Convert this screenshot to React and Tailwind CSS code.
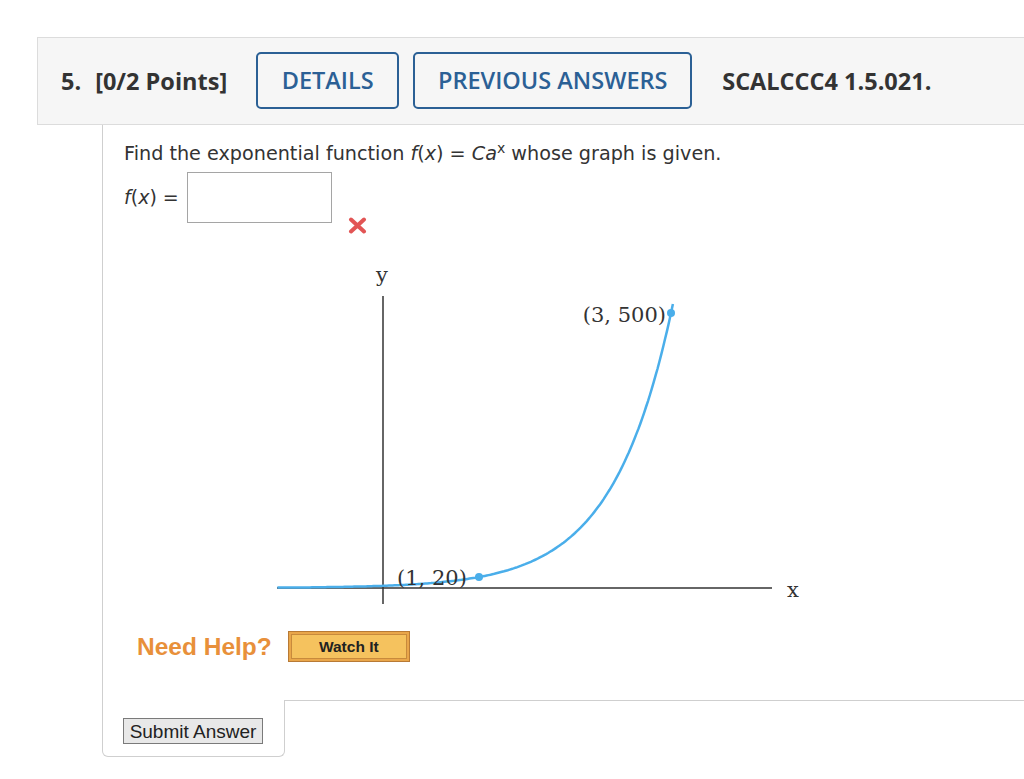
import React from "react";

// exponential curve 4 * 5^x drawn on the graph's own pixel scale
const ox = 259;
const oy = 338;
const ux = 96;
const uy = 0.55;

function curvePath() {
  const pts = [];
  for (let u = -1.1; u <= 3.04; u += 0.02) {
    const px = ox + u * ux;
    const py = oy - uy * 4 * Math.pow(5, u);
    pts.push(`${px.toFixed(1)},${py.toFixed(1)}`);
  }
  return "M" + pts.join(" L");
}

function Graph() {
  return (
    <svg width="700" height="370" className="block mt-[27px]">
      <line x1="153" y1={oy} x2="648" y2={oy} stroke="#333" strokeWidth="1.5" />
      <line x1={ox} y1="46" x2={ox} y2="354" stroke="#333" strokeWidth="1.5" />
      <path d={curvePath()} fill="none" stroke="#4aaeea" strokeWidth="2.5" />
      <circle cx={ox + ux} cy={oy - uy * 20} r="4" fill="#4aaeea" />
      <circle cx={ox + 3 * ux} cy={oy - uy * 500} r="4" fill="#4aaeea" />
      <g fontFamily="'DejaVu Serif', serif" fontSize="21" fill="#333">
        <text x="258" y="32" textAnchor="middle">y</text>
        <text x="669" y="347" textAnchor="middle">x</text>
        <text x="542" y="72" textAnchor="end">(3, 500)</text>
        <text x="273" y="335">(1, 20)</text>
      </g>
    </svg>
  );
}

export default function App() {
  return (
    <div className="w-[1024px] min-h-[779px] bg-white">
      <div className="pt-[37px] pl-[37px]">
        <div className="flex items-center h-[88px] pt-[2px] border-y border-l border-[#dcdcdc] bg-[#f6f6f6] pl-[23px] font-['Open_Sans',sans-serif] text-[#333]">
          <span className="font-bold text-[23.5px]">5.</span>
          <span className="ml-[14px] font-bold text-[23.5px]">[0/2 Points]</span>
          <button className="ml-[29px] -mt-[3px] w-[143px] h-[57px] border-2 border-[#2b6095] rounded-[5px] text-[#2b6095] font-semibold text-[23.5px]">
            DETAILS
          </button>
          <button className="ml-[14px] -mt-[3px] w-[279px] h-[57px] border-2 border-[#2b6095] rounded-[5px] text-[#2b6095] font-semibold text-[23.5px]">
            PREVIOUS ANSWERS
          </button>
          <span className="ml-[30px] font-bold text-[23.5px]">SCALCCC4 1.5.021.</span>
        </div>
      </div>

      <div className="ml-[102px]">
        <div className="border-l border-[#cfcfcf] pl-[21px] pt-[17px] pb-[38px] font-['DejaVu_Sans',sans-serif] text-[#333]">
          <p className="text-[19.2px] leading-[24px]">
            Find the exponential function <i>f</i>(<i>x</i>) = <i>Ca</i>
            <sup className="text-[14px]">x</sup> whose graph is given.
          </p>
          <div className="flex items-center mt-[6px]">
            <span className="text-[19px]">
              <i>f</i>(<i>x</i>) =
            </span>
            <div className="ml-[8px] w-[145px] h-[51px] border border-[#a5a5a5] bg-white" />
            <svg width="19" height="17" viewBox="0 0 19 17" className="ml-[16px] self-end -mb-[11px]">
              <path d="M3 2.5 L16 14.5 M16 2.5 L3 14.5" stroke="#e25555" strokeWidth="4" strokeLinecap="round" />
            </svg>
          </div>
          <Graph />
          <div className="flex items-center mt-[11px] ml-[13px]">
            <span className="font-['Liberation_Sans',Arial,sans-serif] font-bold text-[24.5px] leading-[31px] text-[#e8903a]">
              Need Help?
            </span>
            <div className="ml-[16px] w-[122px] h-[31px] border border-[#b87a35] bg-[#e9a64a] p-[2px]">
              <div className="h-full border border-[#c88a3c] bg-[#f5c25e] flex items-center justify-center font-['Liberation_Sans',Arial,sans-serif] font-bold text-[15.5px] text-[#222]">
                Watch It
              </div>
            </div>
          </div>
        </div>
        <div className="flex">
          <div className="w-[183px] h-[57px] border-l border-r border-b border-[#cfcfcf] rounded-b-[6px] pl-[20px] pt-[18px]">
            <button className="h-[26px] w-[140px] border border-[#7a7a7a] bg-[#e8e8e8] font-['Liberation_Sans',Arial,sans-serif] text-[19px] leading-none text-[#222]">
              Submit Answer
            </button>
          </div>
          <div className="flex-1 border-t border-[#cfcfcf]" />
        </div>
      </div>
    </div>
  );
}
